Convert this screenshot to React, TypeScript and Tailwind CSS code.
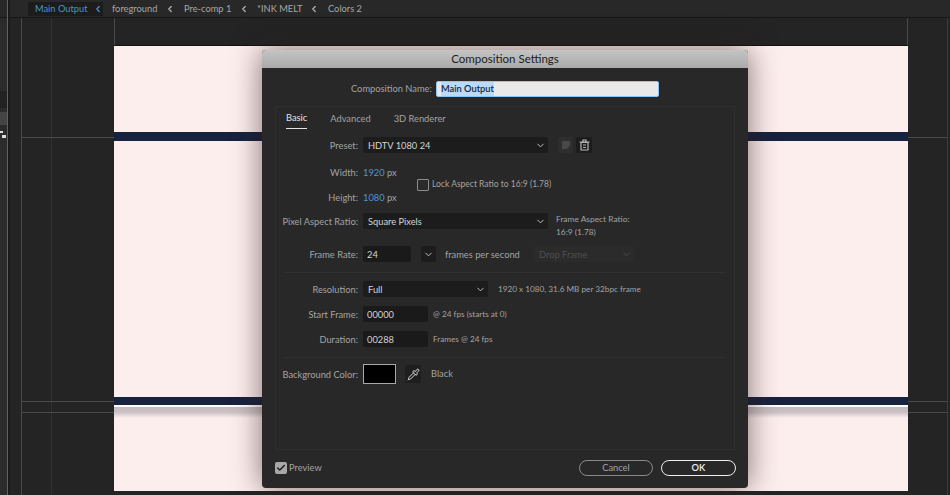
import React from "react";
import { Check, ChevronDown, ChevronLeft, Pipette } from "lucide-react";

const font = { fontFamily: 'Lato, "Noto Sans", sans-serif' };

function Label({ children }: { children: React.ReactNode }) {
  return <div className="w-[82px] shrink-0 whitespace-nowrap pt-px text-right text-[#a3a3a3]">{children}</div>;
}

function Select({ value, w, muted }: { value: string; w: string; muted?: boolean }) {
  return (
    <div className={`flex h-4 items-center justify-between rounded-[2px] pl-[5px] pr-[2px] ${w} ${muted ? "bg-[#2b2b2b] text-[#4f4f4f]" : "bg-[#1c1c1c] text-[#d4d4d4]"}`}>
      <span className="whitespace-nowrap pt-px">{value}</span>
      <ChevronDown size={11} strokeWidth={2} className={muted ? "text-[#4f4f4f]" : "text-[#c8c8c8]"} />
    </div>
  );
}

function Input({ value, w }: { value: string; w: string }) {
  return <div className={`flex h-4 items-center rounded-[2px] bg-[#1a1a1a] pl-1 pt-px text-[#d4d4d4] ${w}`}>{value}</div>;
}

function Tab({ children, active }: { children: React.ReactNode; active?: boolean }) {
  return (
    <div className={`flex h-[20px] flex-col items-center justify-center ${active ? "border-b-[1.5px] border-[#e4e4e4] text-[#e4e4e4]" : "text-[#a3a3a3]"}`}>
      {children}
    </div>
  );
}

function Sep({ active }: { active?: boolean }) {
  return <ChevronLeft size={10} strokeWidth={3} className={active ? "text-[#4b92cf]" : "text-[#b0b0b0]"} />;
}

export default function App() {
  return (
    <div className="relative h-[495px] w-[950px] overflow-hidden bg-[#242424] text-[9.3px]" style={font}>
      {/* Breadcrumb bar */}
      <div className="flex h-[18px] items-center border-b border-[#151515] bg-[#282828] pl-[28px] text-[#a6a6a6]">
        <div className="flex h-[14px] w-[75px] items-center gap-[6px] bg-[#1c1c1c] pl-[7px] text-[#4b92cf]">
          <span className="w-[52px] whitespace-nowrap">Main Output</span>
          <Sep active />
        </div>
        <span className="ml-[9px] w-[46px] whitespace-nowrap">foreground</span>
        <span className="ml-[7px]"><Sep /></span>
        <span className="ml-[9px] w-[47px] whitespace-nowrap">Pre-comp 1</span>
        <span className="ml-[8px]"><Sep /></span>
        <span className="ml-[8px] w-[44px] whitespace-nowrap">*INK MELT</span>
        <span className="ml-[8px]"><Sep /></span>
        <span className="ml-[9px] whitespace-nowrap">Colors 2</span>
      </div>

      {/* Composition preview */}
      <div className="ml-[114px] mt-[27px] flex h-[446px] w-[794px] flex-col bg-[#fdeeee]">
        <div className="h-[87px] border-t border-[#111]" />
        <div className="h-[9px] bg-[#17223f]" />
        <div className="h-[256px]" />
        <div className="h-[8px] bg-[#17223f]" />
        <div className="h-[2px] bg-white" />
        <div className="h-[11px] bg-gradient-to-b from-[#c4babd] via-[#cdc3c6] to-[#fdeeee]" />
      </div>

      {/* Guides and left rail over the canvas */}
      <div className="absolute bottom-0 left-0 top-[18px] w-[7px] bg-[#2b2b2b]" />
      <div className="absolute bottom-0 left-[7px] top-0 w-[1px] bg-[#2f6cae]" />
      <div className="absolute bottom-0 left-[8px] top-0 w-[2px] bg-[#1a1a1a]" />
      <div className="absolute left-0 top-[91px] h-[17px] w-[7px] bg-[#222]" />
      <div className="absolute left-0 top-[112px] h-[13px] w-[7px] bg-[#444]" />
      <div className="absolute left-0 top-[131px] h-[2px] w-[3px] bg-[#ddd]" />
      <div className="absolute left-[2px] top-[135px] h-[3px] w-[4px] bg-[#ddd]" />
      <div className="absolute bottom-0 left-[21px] top-[18px] w-[1px] bg-[#4a4a4a]" />
      <div className="absolute bottom-0 left-[51px] top-[18px] w-[1px] bg-[#352e2a]" />
      <div className="absolute left-[114px] top-[18px] h-[27px] w-[1px] bg-[#4a4a4a]" />
      <div className="absolute left-[907px] top-[18px] h-[27px] w-[1px] bg-[#4a4a4a]" />
      <div className="absolute left-[22px] top-[137px] h-[1px] w-[92px] bg-[#4a4a4a]" />
      <div className="absolute left-[908px] top-[137px] h-[1px] w-[40px] bg-[#4a4a4a]" />
      <div className="absolute left-[22px] top-[401px] h-[1px] w-[92px] bg-[#4a4a4a]" />
      <div className="absolute left-[22px] top-[412px] h-[1px] w-[92px] bg-[#4a4a4a]" />
      <div className="absolute left-[908px] top-[401px] h-[1px] w-[40px] bg-[#4a4a4a]" />
      <div className="absolute left-[908px] top-[412px] h-[1px] w-[40px] bg-[#4a4a4a]" />
      <div className="absolute bottom-0 left-[947px] top-[18px] w-[1px] bg-[#3d3d3d]" />

      {/* Dialog */}
      <div className="absolute left-[262px] top-[50px] flex h-[438px] w-[486px] flex-col overflow-hidden rounded-[4px] bg-[#282828] shadow-[0_0_30px_rgba(50,25,25,0.6)]">
        <div className="flex h-[18px] shrink-0 items-center justify-center bg-gradient-to-b from-[#c4c4c4] to-[#aaaaaa] text-[11.5px] text-[#1c1c1c]">
          Composition Settings
        </div>

        <div className="ml-[89px] mt-[13px] flex h-4 items-center gap-[5px]">
          <span className="w-[80px] whitespace-nowrap text-right text-[#a3a3a3]">Composition Name:</span>
          <div className="flex h-4 w-[223px] items-center rounded-[2px] border border-[#8cc4f2] bg-[#e9e9e9] pl-[4px] font-semibold text-[#1c2a3a]">
            <span className="bg-[#bcd9f5] text-[#14283f]">Main Output</span>
          </div>
        </div>

        {/* Panel */}
        <div className="ml-[13px] mt-[9px] flex h-[344px] w-[460px] flex-col border border-[#2f2f2f]">
          <div className="ml-[10px] mt-[1px] flex h-[20px] items-center gap-[23px] pt-[1px]">
            <Tab active>Basic</Tab>
            <Tab>Advanced</Tab>
            <Tab>3D Renderer</Tab>
          </div>

          <div className="mt-[9px] flex h-4 items-center gap-[5px]">
            <Label>Preset:</Label>
            <Select value="HDTV 1080 24" w="w-[185px]" />
            <div className="ml-[5px] flex h-4 w-[15px] items-center justify-center rounded-[2px] bg-[#2e2e2e]">
              <svg width="10" height="10" viewBox="0 0 10 10"><path d="M1 1h8v5L6 9H1z" fill="#484848" /></svg>
            </div>
            <div className="-ml-[2px] flex h-4 w-[16px] items-center justify-center rounded-[2px] bg-[#1c1c1c]">
              <svg width="11" height="12" viewBox="0 0 11 12" fill="none" stroke="#b5b5b5" strokeWidth="1.2">
                <path d="M2 3.5h7v7.5H2z" />
                <path d="M.5 3h10" />
                <path d="M4 3V1h3v2" />
                <path d="M4 6h3M4 8.5h3" />
              </svg>
            </div>
          </div>

          <div className="mt-[11px] flex h-[41px] items-center">
            <div className="flex w-[141px] shrink-0 flex-col gap-[9px]">
              <div className="flex h-4 items-center gap-[5px]">
                <Label>Width:</Label>
                <span className="pt-px"><span className="text-[#4a97d8]">1920</span> <span className="text-[#a3a3a3]">px</span></span>
              </div>
              <div className="flex h-4 items-center gap-[5px]">
                <Label>Height:</Label>
                <span className="pt-px"><span className="text-[#4a97d8]">1080</span> <span className="text-[#a3a3a3]">px</span></span>
              </div>
            </div>
            <div className="flex items-center gap-[3px]">
              <div className="h-3 w-3 rounded-[1px] border border-[#8d8d8d] bg-[#2a2a2a]" />
              <span className="whitespace-nowrap text-[8.5px] text-[#a3a3a3]">Lock Aspect Ratio to 16:9 (1.78)</span>
            </div>
          </div>

          <div className="mt-[8px] flex h-4 items-center gap-[5px]">
            <Label>Pixel Aspect Ratio:</Label>
            <Select value="Square Pixels" w="w-[185px]" />
            <div className="relative ml-[3px] h-4 w-[90px] whitespace-nowrap text-[8.4px] leading-[13px] text-[#a3a3a3]">
              <div className="absolute left-0 top-0">Frame Aspect Ratio:<br />16:9 (1.78)</div>
            </div>
          </div>

          <div className="mt-[17px] flex h-4 items-center gap-[5px]">
            <Label>Frame Rate:</Label>
            <Input value="24" w="w-[48px]" />
            <div className="ml-[5px] flex h-4 w-[15px] items-center justify-center rounded-[2px] bg-[#1c1c1c]">
              <ChevronDown size={11} strokeWidth={2} className="text-[#c8c8c8]" />
            </div>
            <span className="ml-[4px] w-[75px] whitespace-nowrap pt-px text-[#a3a3a3]">frames per second</span>
            <div className="ml-[9px]"><Select value="Drop Frame" w="w-[100px]" muted /></div>
          </div>

          <div className="mx-[8px] mt-[10px] h-[1px] bg-[#303030]" />

          <div className="mt-[8px] flex h-4 items-center gap-[5px]">
            <Label>Resolution:</Label>
            <Select value="Full" w="w-[125px]" />
            <span className="ml-[5px] whitespace-nowrap text-[8.2px] text-[#a3a3a3]">1920 x 1080, 31.6 MB per 32bpc frame</span>
          </div>

          <div className="mt-[9px] flex h-4 items-center gap-[5px]">
            <Label>Start Frame:</Label>
            <Input value="00000" w="w-[65px]" />
            <span className="whitespace-nowrap text-[8.2px] text-[#a3a3a3]">@ 24 fps (starts at 0)</span>
          </div>

          <div className="mt-[9px] flex h-4 items-center gap-[5px]">
            <Label>Duration:</Label>
            <Input value="00288" w="w-[65px]" />
            <span className="whitespace-nowrap text-[8.2px] text-[#a3a3a3]">Frames @ 24 fps</span>
          </div>

          <div className="mx-[8px] mt-[10px] h-[1px] bg-[#303030]" />

          <div className="mt-[6px] flex h-5 items-center gap-[5px]">
            <Label>Background Color:</Label>
            <div className="h-5 w-[33px] border border-[#a8a8a8] bg-black" />
            <div className="ml-[4px] flex h-[18px] w-[16px] items-center justify-center rounded-[2px] bg-[#1e1e1e]">
              <Pipette size={13} strokeWidth={1.8} className="text-[#e0e0e0] -scale-x-100 rotate-90" />
            </div>
            <span className="ml-[5px] text-[#a3a3a3]">Black</span>
          </div>
        </div>

        {/* Footer */}
        <div className="ml-[13px] mt-[10px] flex h-4 w-[461px] items-center">
          <div className="flex h-[12px] w-[12px] items-center justify-center rounded-[2px] bg-[#a8a8a8]">
            <Check size={10} strokeWidth={3.5} className="text-[#1c1c1c]" />
          </div>
          <span className="ml-[2px] text-[#a3a3a3]">Preview</span>
          <div className="ml-auto flex h-4 w-[74px] items-center justify-center rounded-full border-[1.5px] border-[#8a8a8a] text-[#a3a3a3]">Cancel</div>
          <div className="ml-[8px] flex h-4 w-[75px] items-center justify-center rounded-full border-[1.5px] border-[#ededed] font-semibold text-[#ededed]">OK</div>
        </div>
      </div>
    </div>
  );
}
